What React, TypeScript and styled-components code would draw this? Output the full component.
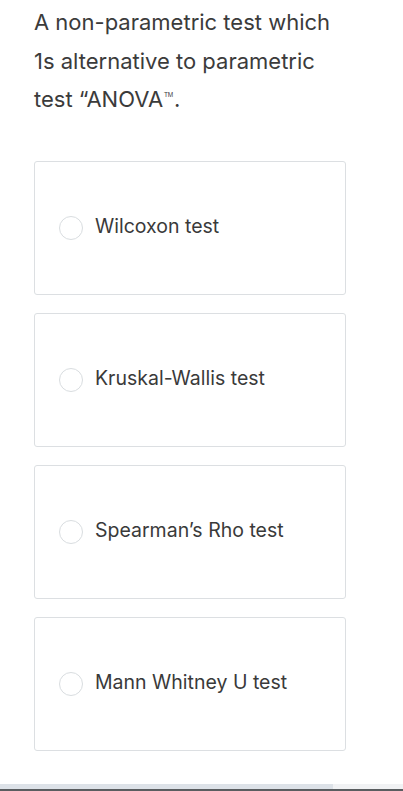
import React from "react";
import styled, { createGlobalStyle } from "styled-components";

const options = [
  "Wilcoxon test",
  "Kruskal-Wallis test",
  "Spearman’s Rho test",
  "Mann Whitney U test",
];

export default function App() {
  return (
    <>
      <GlobalStyle />
      <Page>
        <Question>
          A non-parametric test which
          <br />
          1s alternative to parametric
          <br />
          test “ANOVA<Tm>TM</Tm>.
        </Question>
        <OptionList>
          {options.map((label) => (
            <OptionCard key={label}>
              <Radio />
              <OptionLabel>{label}</OptionLabel>
            </OptionCard>
          ))}
        </OptionList>
      </Page>
      <BottomBar>
        <Track>
          <Thumb />
        </Track>
        <Edge />
      </BottomBar>
    </>
  );
}

/* ---- styles ---- */
const GlobalStyle = createGlobalStyle`
  html, body {
    margin: 0;
    padding: 0;
    background: #fff;
  }
  body {
    font-family: Inter, "Open Sans", "Liberation Sans", sans-serif;
    color: #3a3a3a;
    height: 791px;
    overflow: hidden;
  }
`;

const Page = styled.div`
  padding: 3px 57px 0 34px;
  height: 784px;
  box-sizing: border-box;
`;

const Question = styled.p`
  margin: 0;
  font-size: 22px;
  line-height: 38.5px;
  color: #3b3b3b;
  white-space: nowrap;
`;

const Tm = styled.span`
  display: inline-block;
  font-family: "Liberation Sans", sans-serif;
  font-size: 6.5px;
  line-height: 1;
  vertical-align: top;
  margin: 12px 1px 0 1px;
  letter-spacing: -0.2px;
`;

const OptionList = styled.div`
  display: flex;
  flex-direction: column;
  gap: 18px;
  margin-top: 42px;
  width: 312px;
`;

const OptionCard = styled.div`
  height: 134px;
  box-sizing: border-box;
  border: 1px solid #dcdfe2;
  border-radius: 3px;
  display: flex;
  align-items: center;
  padding-left: 24px;
  gap: 12px;
`;

const Radio = styled.span`
  width: 24px;
  height: 24px;
  box-sizing: border-box;
  border: 1px solid #d9dde0;
  border-radius: 50%;
  flex: none;
`;

const OptionLabel = styled.span`
  font-size: 19.5px;
  color: #3a3a3a;
  margin-top: -4px;
`;

const BottomBar = styled.div`
  display: flex;
  flex-direction: column;
`;

const Track = styled.div`
  height: 5px;
  background: #f1f2f4;
  display: flex;
`;

const Thumb = styled.div`
  width: 333px;
  background: #dde2e8;
`;

const Edge = styled.div`
  height: 2px;
  background: #5a5d60;
`;
